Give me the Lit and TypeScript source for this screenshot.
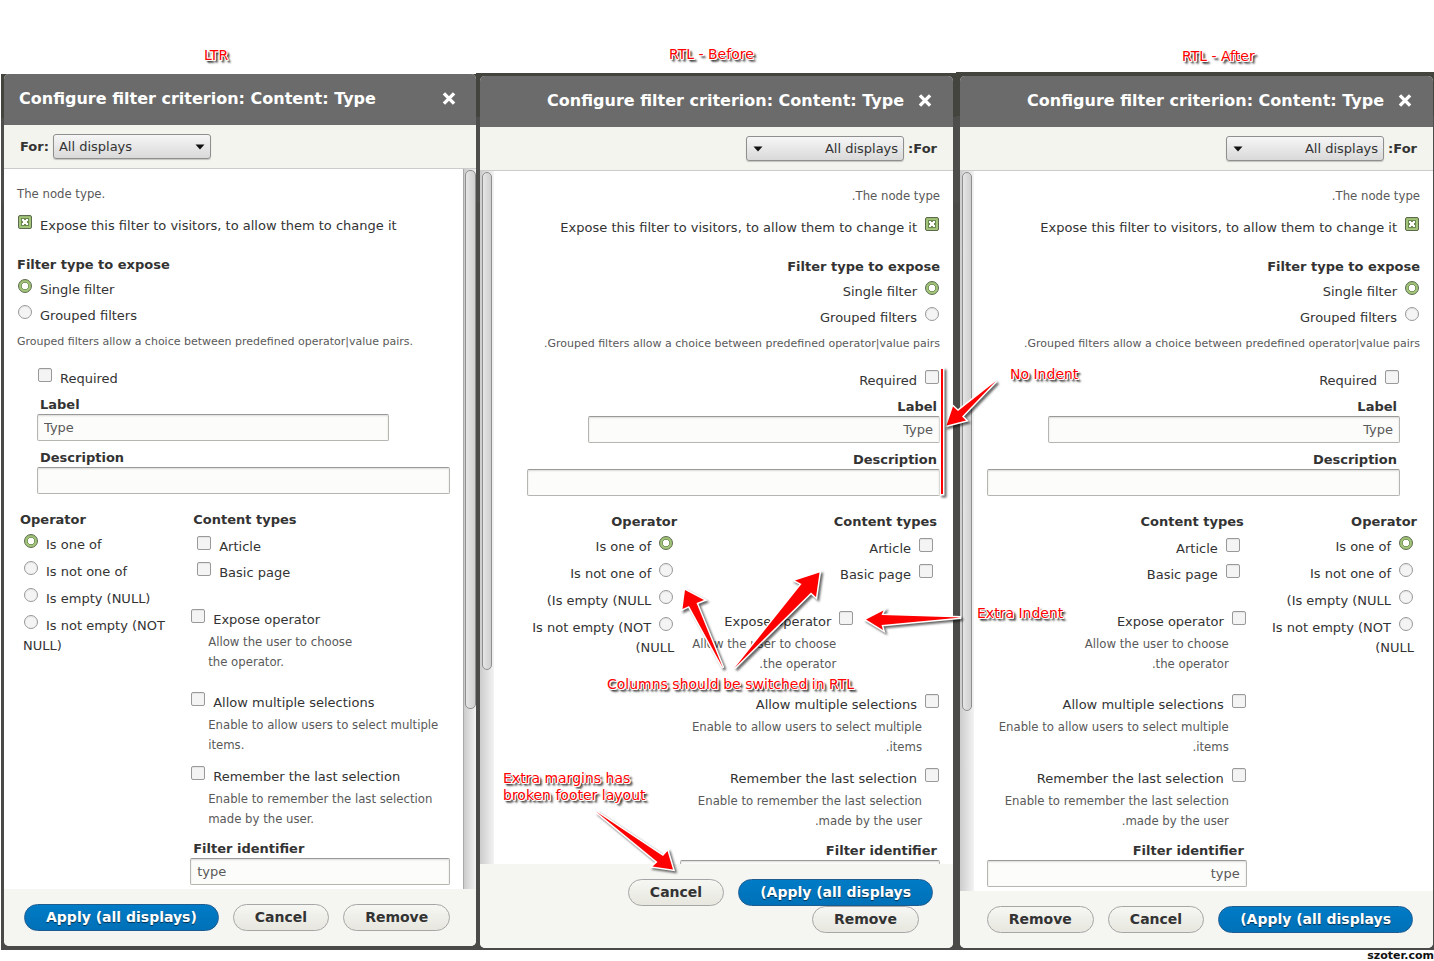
import { LitElement, html, svg, css } from "lit";
import { customElement, property } from "lit/decorators.js";
import { classMap } from "lit/directives/class-map.js";

type Variant = "ltr" | "before" | "after";

@customElement("filter-dialog")
class FilterDialog extends LitElement {
  @property() variant: Variant = "ltr";

  static styles = css`
    :host {
      display: flex;
      flex: 1;
      min-height: 0;
      min-width: 0;
    }
    * {
      box-sizing: border-box;
    }
    .dialog {
      flex: 1;
      min-width: 0;
      display: flex;
      flex-direction: column;
      border-radius: 5px;
      overflow: hidden;
      background: #fff;
      color: #333;
      font: 13px/20px "DejaVu Sans", sans-serif;
    }
    .header {
      flex: none;
      height: 51px;
      padding: 0 20px 2px 15px;
      display: flex;
      align-items: center;
      justify-content: space-between;
      gap: 14px;
      background: #6b6b6b;
      color: #fff;
      direction: ltr;
    }
    .rtl .header {
      justify-content: flex-end;
      padding-right: 21px;
    }
    .title {
      margin: 0;
      font-size: 16px;
      line-height: 24px;
      font-weight: bold;
      white-space: nowrap;
    }
    .close {
      display: block;
      padding: 0;
      border: 0;
      background: none;
      width: 14px;
      height: 14px;
    }
    .close svg {
      display: block;
    }
    .toolbar {
      flex: none;
      height: 44px;
      padding: 0 16px;
      display: flex;
      align-items: center;
      gap: 4px;
      background: #f3f4ee;
      border-bottom: 1px solid #ccc;
    }
    .toolbar label {
      font-weight: bold;
    }
    select {
      appearance: none;
      width: 158px;
      height: 25px;
      padding: 0 5px;
      border: 1px solid #8f8f8f;
      border-radius: 3px;
      box-shadow: 0 1px 1px #0003;
      font: inherit;
      color: #333;
      background:
        url("data:image/svg+xml,%3Csvg xmlns='http://www.w3.org/2000/svg' width='10' height='6'%3E%3Cpath d='M0.5 0.5h9L5 5.5z' fill='%23111'/%3E%3C/svg%3E") no-repeat right 5px center,
        linear-gradient(#f6f6f6, #d9d9d9);
    }
    .rtl select {
      background-position: left 6px center, 0 0;
    }
    .viewport {
      flex: 1;
      min-height: 0;
      display: flex;
      overflow: hidden;
    }
    .content {
      flex: 1;
      min-width: 0;
      padding: 15px 13px;
    }
    .track {
      flex: none;
      width: 13px;
      padding: 1px 0 0 1px;
      background: linear-gradient(90deg, #ccc, #f3f3f3);
      border-left: 1px solid #aaa;
    }
    .rtl .track {
      width: 14px;
      border-left: 0;
      padding: 1px 2px 0;
    }
    .thumb {
      height: 75%;
      border: 1px solid #8e8e8e;
      border-radius: 5px;
      background: linear-gradient(90deg, #e6e6e6, #cfcfcf);
    }
    .before .thumb {
      height: 72%;
    }
    p {
      margin: 0;
    }
    .help {
      font-family: "DejaVu Sans Condensed", "DejaVu Sans", sans-serif;
      color: #595959;
    }
    .note {
      font-size: 11px;
      color: #595959;
      margin-top: 6px;
    }
    .heading {
      margin: 0;
      font-size: 13px;
      line-height: 20px;
      font-weight: bold;
    }
    .choice {
      min-height: 20px;
    }
    .choice input {
      appearance: none;
      width: 14px;
      height: 14px;
      margin: -1px 0 0;
      margin-inline: 1px 8px;
      vertical-align: top;
      border: 1px solid #999;
      border-radius: 2px;
      background: #f4f4f4;
      box-shadow: inset 0 1px 1px #0001;
    }
    .choice input[type="radio"] {
      border-radius: 50%;
    }
    .choice input[type="radio"]:checked {
      border-color: #5c6b4d;
      background: radial-gradient(circle, #fff 0 3px, #7d9a60 3px 4px, #a4c67b 4px);
    }
    .choice input[type="checkbox"]:checked {
      border-color: #5c6b4d;
      background: #a4c67b
        url("data:image/svg+xml,%3Csvg xmlns='http://www.w3.org/2000/svg' width='8' height='8'%3E%3Cpath d='M0 0h8v8H0z' fill='%236b8a4f'/%3E%3Cpath d='M1 1h2v1h2V1h2v2H6v2h1v2H5V6H3v1H1V5h1V3H1z' fill='%23fff'/%3E%3C/svg%3E")
        no-repeat center;
    }
    .exposed {
      margin-top: 12px;
    }
    .kind {
      margin: 19px 0 0;
      padding: 0;
      border: 0;
    }
    .kind .choices {
      margin-top: 5px;
    }
    .choices {
      display: flex;
      flex-direction: column;
      gap: 6px;
    }
    .indented {
      margin-top: 17px;
      padding-inline-start: 20px;
    }
    .before .indented {
      padding-inline-start: 0;
    }
    .field {
      margin-top: 8px;
    }
    .choice + .field {
      margin-top: 7px;
    }
    .field label {
      display: block;
      padding: 0 3px;
      line-height: 18px;
      font-weight: bold;
    }
    .text {
      display: block;
      width: 100%;
      height: 27px;
      padding: 0 6px;
      border: 1px solid #b5b5b1;
      border-top-color: #999;
      border-radius: 2px;
      background: #fcfcfa;
      box-shadow: inset 0 1px 2px #0002;
      font: inherit;
      color: #595959;
    }
    .text.short {
      width: 352px;
      max-width: 100%;
    }
    .text.long {
      width: 413px;
      max-width: 100%;
    }
    .columns {
      display: grid;
      grid-template-columns: 2fr 3fr;
      margin-top: 16px;
    }
    .before .columns {
      grid-template-columns: 3fr 2fr;
    }
    .before .operator {
      order: 1;
    }
    .columns fieldset {
      margin: 0;
      padding: 0 3px;
      border: 0;
      min-width: 0;
    }
    .operator .choices {
      margin-top: 5px;
      padding: 0 3px;
      gap: 7px;
    }
    .types .choices {
      margin-top: 7px;
      padding: 0 3px;
    }
    .option .help {
      padding-inline-start: 18px;
      margin-top: 2px;
    }
    .option {
      margin-top: 12px;
    }
    .option.narrow {
      width: 67%;
      margin-top: 27px;
    }
    .before .option.narrow {
      margin-inline-start: 33%;
    }
    .option.spaced {
      margin-top: 21px;
    }
    .columns .field {
      margin-top: 11px;
    }
    .footer {
      flex: none;
      padding: 15px 20px;
      display: flex;
      flex-wrap: wrap;
      background: #f5f5f2;
    }
    .before .footer {
      padding-inline-end: 40px;
    }
    .button {
      height: 27px;
      padding: 0 21px 2px;
      border: 1px solid #a6a6a6;
      border-radius: 14px;
      background: linear-gradient(#f6f6f3, #e7e7df);
      color: #333;
      font: bold 14px/20px "DejaVu Sans", sans-serif;
      white-space: nowrap;
    }
    .button + .button {
      margin-inline-start: 14px;
    }
    .button.primary {
      border-color: #1e5c90;
      background: linear-gradient(#007bc6, #0071b8);
      color: #fff;
      text-shadow: 0 1px 1px #0009;
    }
  `;

  /* A final bracket takes the direction of the dialog, not of the words before it. */
  private trail(label: string) {
    if (this.variant === "ltr" || !label.endsWith(")")) return label;
    return `${label.slice(0, -1)}\u2067)\u2069`;
  }

  private choice(id: string, label: string, type: "radio" | "checkbox", name = id, checked = false) {
    return html`<div class="choice"
      ><input type=${type} id=${id} name=${name} ?checked=${checked} /><label for=${id}>${this.trail(label)}</label></div
    >`;
  }

  render() {
    const rtl = this.variant !== "ltr";
    return html`
      <section
        class=${classMap({ dialog: true, rtl, before: this.variant === "before" })}
        dir=${rtl ? "rtl" : "ltr"}
      >
        <header class="header">
          <h2 class="title">Configure filter criterion: Content: Type</h2>
          <button class="close" type="button" aria-label="Close">
            <svg width="14" height="14" viewBox="0 0 14 14">
              <path d="M1.9 1.4l10.2 10.2M12.1 1.4l-10.2 10.2" stroke="#fff" stroke-width="3.4" />
            </svg>
          </button>
        </header>
        <div class="toolbar">
          <label for="display">For:</label>
          <select id="display"><option>All displays</option></select>
        </div>
        <div class="viewport">
          <div class="content">
            <p class="help">The node type.</p>
            <div class="exposed">
              ${this.choice("expose", "Expose this filter to visitors, to allow them to change it", "checkbox", "expose", true)}
            </div>
            <fieldset class="kind">
              <h3 class="heading">Filter type to expose</h3>
              <div class="choices">
                ${this.choice("single", "Single filter", "radio", "kind", true)}
                ${this.choice("grouped", "Grouped filters", "radio", "kind")}
              </div>
              <p class="note">Grouped filters allow a choice between predefined operator|value pairs.</p>
            </fieldset>
            <div class="indented">
              ${this.choice("required", "Required", "checkbox")}
              <div class="field">
                <label for="label">Label</label>
                <input class="text short" id="label" type="text" .value=${"Type"} />
              </div>
              <div class="field">
                <label for="description">Description</label>
                <input class="text long" id="description" type="text" />
              </div>
            </div>
            <div class="columns">
              <fieldset class="operator">
                <h3 class="heading">Operator</h3>
                <div class="choices">
                  ${this.choice("one", "Is one of", "radio", "operator", true)}
                  ${this.choice("not-one", "Is not one of", "radio", "operator")}
                  ${this.choice("empty", "Is empty (NULL)", "radio", "operator")}
                  ${this.choice("not-empty", "Is not empty (NOT NULL)", "radio", "operator")}
                </div>
              </fieldset>
              <div class="values">
                <fieldset class="types">
                  <h3 class="heading">Content types</h3>
                  <div class="choices">
                    ${this.choice("article", "Article", "checkbox")}
                    ${this.choice("page", "Basic page", "checkbox")}
                  </div>
                </fieldset>
                <div class="option narrow">
                  ${this.choice("expose-operator", "Expose operator", "checkbox")}
                  <p class="help">Allow the user to choose the operator.</p>
                </div>
                <div class="option spaced">
                  ${this.choice("multiple", "Allow multiple selections", "checkbox")}
                  <p class="help">Enable to allow users to select multiple items.</p>
                </div>
                <div class="option">
                  ${this.choice("remember", "Remember the last selection", "checkbox")}
                  <p class="help">Enable to remember the last selection made by the user.</p>
                </div>
                <div class="field">
                  <label for="identifier">Filter identifier</label>
                  <input class="text" id="identifier" type="text" .value=${"type"} />
                </div>
              </div>
            </div>
          </div>
          <div class="track"><div class="thumb"></div></div>
        </div>
        <footer class="footer">
          <button class="button primary" type="button">${this.trail("Apply (all displays)")}</button>
          <button class="button" type="button">Cancel</button>
          <button class="button" type="button">Remove</button>
        </footer>
      </section>
    `;
  }
}

const ARROWS = [
  "685,590 704,600 696.5,603 723,668 689,606 682.5,609",
  "819.5,572.5 816,597 811,592.5 734.5,668 801.5,584 795,580.5",
  "866,619.5 883.5,610.5 881.5,615 961,617.5 881.5,625 883,630",
  "946.5,425.5 953,406.5 958,411 996,381 962,416.5 966,420.5",
  "673,869.5 667.5,851 663,856 596,811.5 657.5,862 652.5,866.5",
];

@customElement("app-root")
class AppRoot extends LitElement {
  static styles = css`
    :host {
      display: block;
      position: relative;
      height: 100vh;
      min-height: 600px;
      overflow: hidden;
      background: #fff;
      font-family: "DejaVu Sans", sans-serif;
    }
    * {
      box-sizing: border-box;
    }
    .board {
      height: 100%;
      display: grid;
      grid-template-columns: 476fr 480fr 478fr;
      padding: 72px 0 11px;
    }
    .pane {
      display: flex;
      min-width: 0;
      min-height: 0;
      background: linear-gradient(#43443d 0 44px, #4d4d4c 44px 130px, #4a4a48 130px);
    }
    .ltr {
      margin: 2px 0 0 1px;
      padding: 0 0 4px 3px;
    }
    .before {
      margin-top: 1px;
      padding: 3px 3px 2px 4px;
    }
    .after {
      padding: 4px 1px 2px 4px;
    }
    .arrows {
      position: absolute;
      inset: 0;
      width: 100%;
      height: 100%;
      pointer-events: none;
    }
    .arrow {
      fill: #f00;
      stroke: #fff;
      stroke-width: 3px;
      paint-order: stroke;
      filter: drop-shadow(2px 2px 1px #0009);
    }
    .callout {
      position: absolute;
      margin: 0;
      color: #f00;
      font-size: 14px;
      line-height: 17px;
      white-space: pre;
      text-shadow: 1px 0 #fff, -1px 0 #fff, 0 1px #fff, 0 -1px #fff, 1px 1px #fff, -1px -1px #fff,
        2px 2px 2px #000, 3px 3px 2px #0008;
    }
    .c-ltr { left: 204px; top: 47px; }
    .c-before { left: 669px; top: 46px; }
    .c-after { left: 1182px; top: 48px; }
    .c-indent { left: 1010px; top: 366px; }
    .c-extra { left: 977px; top: 605px; }
    .c-columns { left: 607px; top: 676px; }
    .c-footer { left: 503px; top: 770px; }
    .mark {
      position: absolute;
      right: 0;
      bottom: -1px;
      font: bold 11px/12px "DejaVu Sans", sans-serif;
      color: #111;
    }
  `;

  render() {
    return html`
      <main class="board">
        <div class="pane ltr"><filter-dialog variant="ltr"></filter-dialog></div>
        <div class="pane before"><filter-dialog variant="before"></filter-dialog></div>
        <div class="pane after"><filter-dialog variant="after"></filter-dialog></div>
      </main>
      <svg class="arrows" viewBox="0 0 1434 961" preserveAspectRatio="none" aria-hidden="true">
        ${ARROWS.map((points) => svg`<polygon class="arrow" points=${points} />`)}
        <rect class="arrow" x="941" y="369" width="2" height="125" />
      </svg>
      <p class="callout c-ltr">LTR</p>
      <p class="callout c-before">RTL - Before</p>
      <p class="callout c-after">RTL - After</p>
      <p class="callout c-indent">No Indent</p>
      <p class="callout c-extra">Extra Indent</p>
      <p class="callout c-columns">Columns should be switched in RTL</p>
      <p class="callout c-footer">Extra margins has<br />broken footer layout</p>
      <span class="mark">szoter.com</span>
    `;
  }
}
